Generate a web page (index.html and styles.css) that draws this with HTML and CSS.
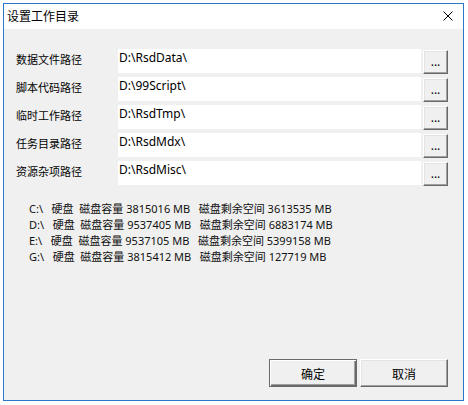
FILE: index.html
```html
<!DOCTYPE html>
<html lang="zh-CN">
<head>
<meta charset="utf-8">
<title>设置工作目录</title>
<link rel="stylesheet" href="styles.css">
</head>
<body>
<div class="window">
  <div class="titlebar">
    <span class="title">设置工作目录</span>
    <svg class="close" width="10" height="10" viewBox="0 0 10 10"><path d="M0.5 0.5L9.5 9.5M9.5 0.5L0.5 9.5" stroke="#000" stroke-width="1" fill="none"/></svg>
  </div>
  <div class="body">
    <div class="rows">
      <div class="row"><span class="label">数据文件路径</span><div class="field">D:\RsdData\</div><button class="browse">...</button></div>
      <div class="row"><span class="label">脚本代码路径</span><div class="field">D:\99Script\</div><button class="browse">...</button></div>
      <div class="row"><span class="label">临时工作路径</span><div class="field">D:\RsdTmp\</div><button class="browse">...</button></div>
      <div class="row"><span class="label">任务目录路径</span><div class="field">D:\RsdMdx\</div><button class="browse">...</button></div>
      <div class="row"><span class="label">资源杂项路径</span><div class="field">D:\RsdMisc\</div><button class="browse">...</button></div>
    </div>
    <div class="drives">
      <div class="drive">C:\   硬盘  磁盘容量 3815016 MB   磁盘剩余空间 3613535 MB</div>
      <div class="drive">D:\   硬盘  磁盘容量 9537405 MB   磁盘剩余空间 6883174 MB</div>
      <div class="drive">E:\   硬盘  磁盘容量 9537105 MB   磁盘剩余空间 5399158 MB</div>
      <div class="drive">G:\   硬盘  磁盘容量 3815412 MB   磁盘剩余空间 127719 MB</div>
    </div>
    <div class="actions">
      <button class="btn default">确定</button>
      <button class="btn">取消</button>
    </div>
  </div>
</div>
</body>
</html>
```
FILE: styles.css
```css
html, body {
  margin: 0;
  padding: 0;
  background: #ffffff;
}
body {
  font-family: "Segoe UI", "Noto Sans", "Noto Sans CJK SC", sans-serif;
  font-size: 12px;
  color: #000;
}
.window {
  margin: 3px 0 0 3px;
  width: 459px;
  border: 1px solid #2b79c6;
  background: #f0f0f0;
}
.titlebar {
  height: 25px;
  background: #ffffff;
  display: flex;
  align-items: center;
  justify-content: space-between;
  padding: 0 10px 0 3px;
}
.title {
  font-family: "Noto Sans CJK SC", sans-serif;
  font-size: 12px;
  line-height: 16px;
  margin-top: -1px;
}
.close {
  display: block;
  margin-top: -1px;
}
.body {
  height: 371px;
  box-sizing: border-box;
  padding: 20px 15px 13px 12px;
  display: flex;
  flex-direction: column;
}
.rows {
  display: flex;
  flex-direction: column;
  gap: 4px;
}
.row {
  display: flex;
  align-items: flex-start;
  height: 24px;
}
.label {
  width: 102px;
  flex: none;
  font-family: "Noto Sans CJK SC", sans-serif;
  font-size: 11px;
  line-height: 16px;
  padding-top: 2px;
  color: #000;
}
.field {
  width: 303px;
  height: 24px;
  flex: none;
  background: #ffffff;
  box-sizing: border-box;
  padding: 1px 0 0 1px;
  line-height: 16px;
  white-space: nowrap;
}
.browse {
  width: 25px;
  height: 24px;
  margin: 1px 0 0 2px;
  flex: none;
  padding: 0;
  background: #f0f0f0;
  border: 1px solid;
  border-color: #ffffff #696969 #696969 #ffffff;
  box-shadow: inset -1px -1px 0 #a0a0a0, inset 1px 1px 0 #e3e3e3;
  font-family: "Segoe UI", "Noto Sans", sans-serif;
  font-size: 12px;
  line-height: 14px;
  color: #000;
}
.drives {
  margin-top: 16px;
  padding-left: 13px;
  font-family: "Segoe UI", "Noto Sans", "Noto Sans CJK SC", sans-serif;
  font-size: 11px;
  line-height: 16px;
  color: #111;
}
.drive {
  white-space: pre;
}
.actions {
  margin-top: auto;
  display: flex;
  justify-content: flex-end;
  gap: 3px;
}
.btn {
  width: 88px;
  height: 28px;
  padding: 0;
  background: #f0f0f0;
  border: 1px solid;
  border-color: #ffffff #696969 #696969 #ffffff;
  box-shadow: inset -1px -1px 0 #a0a0a0, inset 1px 1px 0 #e3e3e3;
  font-family: "Noto Sans CJK SC", sans-serif;
  font-size: 12px;
  color: #000;
}
.btn.default {
  border: 1px solid #6a6a6a;
  box-shadow: inset 1px 1px 0 #ffffff, inset -1px -1px 0 #696969, inset -2px -2px 0 #a0a0a0;
}
```
